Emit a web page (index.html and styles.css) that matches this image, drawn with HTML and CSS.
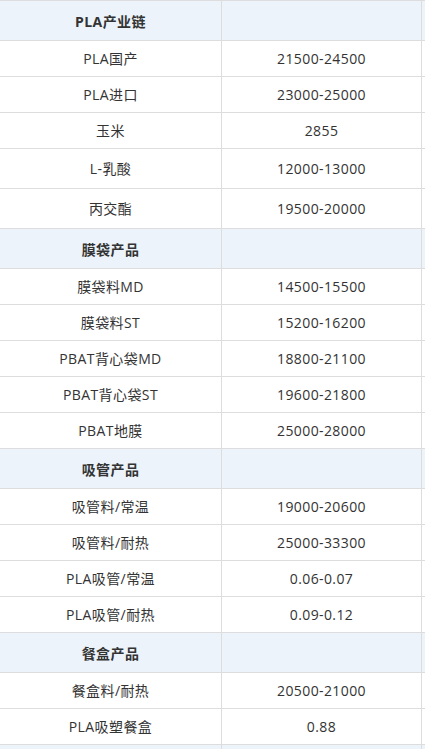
FILE: index.html
```html
<!DOCTYPE html>
<html lang="zh-CN">
<head>
<meta charset="utf-8">
<title>PLA产业链价格</title>
<link rel="stylesheet" href="styles.css">
</head>
<body>
<div class="wrap">
<table class="price-table">
  <colgroup>
    <col class="c-name">
    <col class="c-price">
    <col class="c-extra">
  </colgroup>
  <tbody>
    <tr class="sec"><th>PLA产业链</th><th></th><th></th></tr>
    <tr><td>PLA国产</td><td>21500-24500</td><td></td></tr>
    <tr><td>PLA进口</td><td>23000-25000</td><td></td></tr>
    <tr><td>玉米</td><td>2855</td><td></td></tr>
    <tr class="tall"><td>L-乳酸</td><td>12000-13000</td><td></td></tr>
    <tr class="tall"><td>丙交酯</td><td>19500-20000</td><td></td></tr>
    <tr class="sec"><th>膜袋产品</th><th></th><th></th></tr>
    <tr><td>膜袋料MD</td><td>14500-15500</td><td></td></tr>
    <tr><td>膜袋料ST</td><td>15200-16200</td><td></td></tr>
    <tr><td>PBAT背心袋MD</td><td>18800-21100</td><td></td></tr>
    <tr><td>PBAT背心袋ST</td><td>19600-21800</td><td></td></tr>
    <tr><td>PBAT地膜</td><td>25000-28000</td><td></td></tr>
    <tr class="sec"><th>吸管产品</th><th></th><th></th></tr>
    <tr><td>吸管料/常温</td><td>19000-20600</td><td></td></tr>
    <tr><td>吸管料/耐热</td><td>25000-33300</td><td></td></tr>
    <tr><td>PLA吸管/常温</td><td>0.06-0.07</td><td></td></tr>
    <tr><td>PLA吸管/耐热</td><td>0.09-0.12</td><td></td></tr>
    <tr class="sec"><th>餐盒产品</th><th></th><th></th></tr>
    <tr><td>餐盒料/耐热</td><td>20500-21000</td><td></td></tr>
    <tr><td>PLA吸塑餐盒</td><td>0.88</td><td></td></tr>
    <tr class="sec"><th></th><th></th><th></th></tr>
  </tbody>
</table>
</div>
</body>
</html>
```

FILE: styles.css
```css
html, body {
  margin: 0;
  padding: 0;
  background: #ffffff;
}

body {
  font-family: "Open Sans", "Noto Sans CJK SC", sans-serif;
  font-size: 14px;
  color: #333333;
}

.wrap {
  width: 425px;
  height: 749px;
  overflow: hidden;
}

.price-table {
  border-collapse: collapse;
  table-layout: fixed;
  width: 522px;
  margin-left: -1px;
}

.c-name { width: 222px; }
.c-price { width: 200px; }
.c-extra { width: 100px; }

.price-table th,
.price-table td {
  border: 1px solid #dddddd;
  padding: 0 4px;
  text-align: center;
  vertical-align: middle;
  white-space: nowrap;
  line-height: 20px;
  letter-spacing: 0.4px;
}

.price-table tr {
  height: 36px;
}

.price-table tr.tall {
  height: 40px;
}

.price-table tr.sec {
  height: 40px;
  background: #ecf3fa;
}

.price-table th {
  font-weight: bold;
  padding-top: 3px;
}
```
